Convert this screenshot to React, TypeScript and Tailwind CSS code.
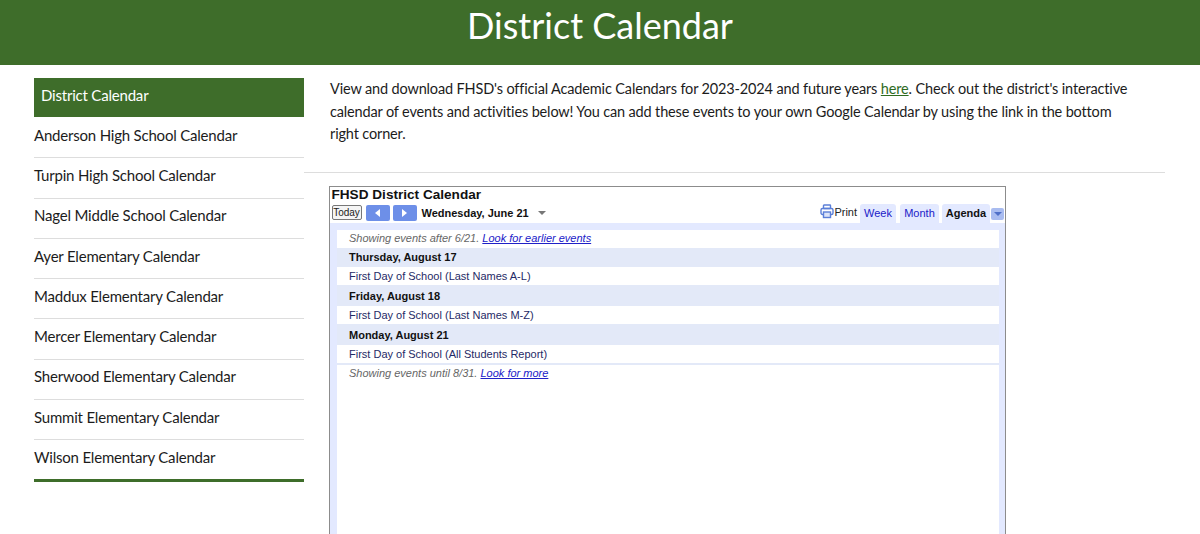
const schools = [
  "Anderson High School Calendar",
  "Turpin High School Calendar",
  "Nagel Middle School Calendar",
  "Ayer Elementary Calendar",
  "Maddux Elementary Calendar",
  "Mercer Elementary Calendar",
  "Sherwood Elementary Calendar",
  "Summit Elementary Calendar",
  "Wilson Elementary Calendar",
]

const events = [
  { day: "Thursday, August 17", title: "First Day of School (Last Names A-L)" },
  { day: "Friday, August 18", title: "First Day of School (Last Names M-Z)" },
  { day: "Monday, August 21", title: "First Day of School (All Students Report)" },
]

function Calendar() {
  return (
    <div className="ml-[25px] h-[400px] w-[677px] border border-[#8c8c8c] font-['Liberation_Sans',sans-serif]">
      <div className="h-[15px] pl-[1.5px] text-[13.6px] leading-[15px] font-bold text-[#111]">FHSD District Calendar</div>

      {/* Toolbar */}
      <div className="flex h-[21px] items-start justify-between pt-[3px] pr-[1px] pl-[1.5px]">
        <div className="flex items-center">
          <button className="flex h-[15px] w-[30px] items-center justify-center rounded-[2px] border border-[#777] bg-[#f5f5f5] text-[10px] text-[#222]">Today</button>
          <button className="ml-[4px] flex h-[16px] w-[24px] items-center justify-center rounded-[2px] bg-[#6d8fe8]">
            <span className="h-0 w-0 border-y-[4px] border-r-[5px] border-y-transparent border-r-white" />
          </button>
          <button className="ml-[3px] flex h-[16px] w-[24px] items-center justify-center rounded-[2px] bg-[#6d8fe8]">
            <span className="h-0 w-0 border-y-[4px] border-l-[5px] border-y-transparent border-l-white" />
          </button>
          <span className="ml-[5px] text-[11px] font-bold text-[#111]">Wednesday, June 21</span>
          <span className="ml-[9px] h-0 w-0 border-x-[4px] border-t-[4px] border-x-transparent border-t-[#777]" />
        </div>
        <div className="-mt-[1px] flex items-start text-[11px] leading-[14px]">
          <svg width="14" height="15" viewBox="0 0 14 15" fill="none" stroke="#5b7fd8" strokeWidth="1.4">
            <rect x="3.5" y="1" width="7" height="3.5" rx="0.5" />
            <rect x="1" y="4.5" width="12" height="6" rx="1.5" />
            <rect x="3.5" y="8" width="7" height="5.5" fill="#dbe3f8" />
          </svg>
          <span className="pt-[1px] text-[#222]">Print</span>
          <span className="ml-[3px] h-[19px] w-[36px] rounded-t-[3px] bg-[#e3e9ff] pt-[2px] text-center text-[#2020c8]">Week</span>
          <span className="ml-[4px] h-[19px] w-[39px] rounded-t-[3px] bg-[#e3e9ff] pt-[2px] text-center text-[#2020c8]">Month</span>
          <span className="ml-[3px] h-[19px] w-[48px] rounded-t-[3px] bg-[#e3e9ff] pt-[2px] text-center font-bold text-[#111]">Agenda</span>
          <span className="mt-[4px] ml-[1px] flex h-[12px] w-[13px] items-center justify-center rounded-[2px] bg-[#a9bcf0]">
            <span className="h-0 w-0 border-x-[4px] border-t-[4px] border-x-transparent border-t-[#4f6fc8]" />
          </span>
        </div>
      </div>

      {/* Agenda */}
      <div className="h-[400px] bg-[#e3e9ff] pt-[7px] pr-[6px] pl-[7px]">
        <div className="h-full bg-white text-[11px]">
          <div className="h-[18px] pl-[12px] leading-[17px] text-[#666] italic">
            Showing events after 6/21. <a className="text-[#2020c8] underline">Look for earlier events</a>
          </div>
          {events.map((e) => (
            <div key={e.day}>
              <div className="h-[19px] bg-[#e3e9f8] pl-[12px] leading-[19px] font-bold text-[#111]">{e.day}</div>
              <div className="h-[20px] border-b-2 border-[#e3e9f8] pl-[12px] leading-[19px] text-[#1f2a66]">{e.title}</div>
            </div>
          ))}
          <div className="pl-[12px] leading-[17px] text-[#666] italic">
            Showing events until 8/31. <a className="text-[#2020c8] underline">Look for more</a>
          </div>
        </div>
      </div>
    </div>
  )
}

export default function App() {
  return (
    <div className="h-[534px] overflow-hidden bg-white font-['Lato',sans-serif] text-[#1c1c1c]">
      <header className="flex h-[65px] items-start justify-center bg-[#3e6d2a]">
        <h1 className="text-[36px] leading-[50px] text-white">District Calendar</h1>
      </header>

      <div className="flex pt-[13px] pl-[34px]">
        {/* Sidebar */}
        <nav className="w-[270px] text-[15px] tracking-[-0.2px]">
          <div className="flex h-[39px] items-center bg-[#3e6d2a] pb-[5px] pl-[7px] text-white">District Calendar</div>
          <div className="pt-[1px]">
            {schools.map((s) => (
              <div key={s} className="flex h-[40.25px] items-center border-b border-[#ddd] pb-[5px] last:border-b-0">{s}</div>
            ))}
          </div>
          <div className="-mt-[1px] h-[3px] bg-[#3e6d2a]" />
        </nav>

        {/* Main */}
        <main className="flex-1 pr-[35px]">
          <p className="ml-[26px] w-[805px] text-[14.5px] leading-[22.5px] tracking-[-0.15px]">
            View and download FHSD's official Academic Calendars for 2023-2024 and future years <a className="text-[#2f6b1f] underline">here</a>. Check out the district's interactive calendar of events and activities below! You can add these events to your own Google Calendar by using the link in the bottom right corner.
          </p>
          <hr className="mt-[26px] mb-[13px] border-[#ddd]" />
          <Calendar />
        </main>
      </div>
    </div>
  )
}
